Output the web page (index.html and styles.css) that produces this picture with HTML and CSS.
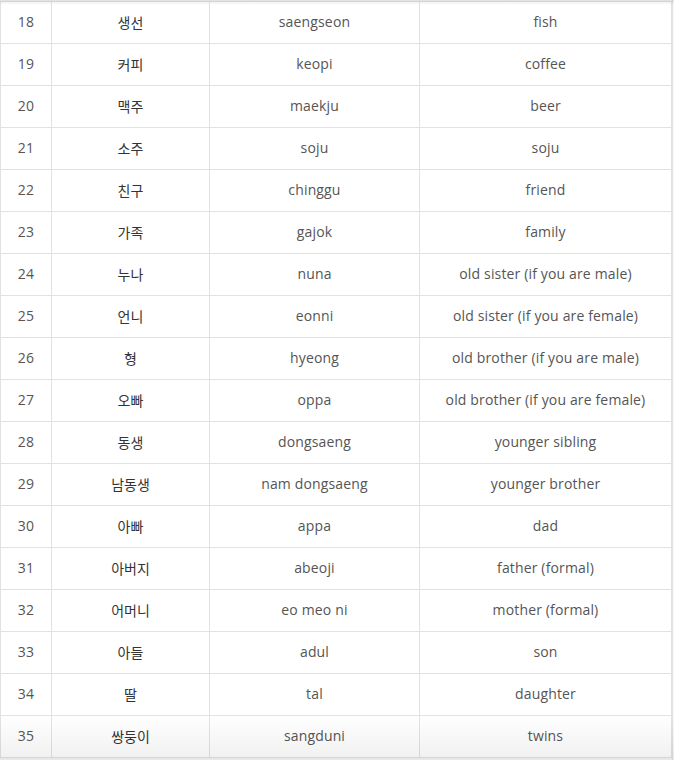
FILE: index.html
```html
<!DOCTYPE html>
<html lang="ko">
<head>
<meta charset="utf-8">
<title>Korean words</title>
<link rel="stylesheet" href="styles.css">
</head>
<body>
<div class="frame">
<table class="vocab">
<colgroup><col class="c-num"><col class="c-ko"><col class="c-rom"><col class="c-en"></colgroup>
<tbody>
<tr><td>18</td><td class="ko">생선</td><td>saengseon</td><td>fish</td></tr>
<tr><td>19</td><td class="ko">커피</td><td>keopi</td><td>coffee</td></tr>
<tr><td>20</td><td class="ko">맥주</td><td>maekju</td><td>beer</td></tr>
<tr><td>21</td><td class="ko">소주</td><td>soju</td><td>soju</td></tr>
<tr><td>22</td><td class="ko">친구</td><td>chinggu</td><td>friend</td></tr>
<tr><td>23</td><td class="ko">가족</td><td>gajok</td><td>family</td></tr>
<tr><td>24</td><td class="ko">누나</td><td>nuna</td><td>old sister (if you are male)</td></tr>
<tr><td>25</td><td class="ko">언니</td><td>eonni</td><td>old sister (if you are female)</td></tr>
<tr><td>26</td><td class="ko">형</td><td>hyeong</td><td>old brother (if you are male)</td></tr>
<tr><td>27</td><td class="ko">오빠</td><td>oppa</td><td>old brother (if you are female)</td></tr>
<tr><td>28</td><td class="ko">동생</td><td>dongsaeng</td><td>younger sibling</td></tr>
<tr><td>29</td><td class="ko">남동생</td><td>nam dongsaeng</td><td>younger brother</td></tr>
<tr><td>30</td><td class="ko">아빠</td><td>appa</td><td>dad</td></tr>
<tr><td>31</td><td class="ko">아버지</td><td>abeoji</td><td>father (formal)</td></tr>
<tr><td>32</td><td class="ko">어머니</td><td>eo meo ni</td><td>mother (formal)</td></tr>
<tr><td>33</td><td class="ko">아들</td><td>adul</td><td>son</td></tr>
<tr><td>34</td><td class="ko">딸</td><td>tal</td><td>daughter</td></tr>
<tr><td>35</td><td class="ko">쌍둥이</td><td>sangduni</td><td>twins</td></tr>
</tbody>
</table>
<div class="shade-top"></div>
<div class="shade-bottom"></div>
</div>
</body>
</html>
```
FILE: styles.css
```css
html, body {
  margin: 0;
  padding: 0;
  background: #ffffff;
  overflow: hidden;
}
.frame {
  width: 674px;
  height: 760px;
  overflow: hidden;
  position: relative;
  background: linear-gradient(to right, #f6f6f6 0, #f6f6f6 671px, #f4f4f4 671px, #f4f4f4 672px, #e2e2e2 672px, #e2e2e2 673px, #fafafa 673px);
}
.vocab {
  border-collapse: collapse;
  table-layout: fixed;
  width: 671px;
  margin-top: 1px;
  font-family: "Open Sans", "Noto Sans CJK KR", sans-serif;
  font-size: 14px;
  letter-spacing: 0.15px;
  color: #555555;
  background: #ffffff;
}
.c-num { width: 51px; }
.c-ko { width: 158px; }
.c-rom { width: 210px; }
.c-en { width: 252px; }
.vocab td {
  border: 1px solid #e2e2e2;
  height: 40px;
  padding: 0 0 1px;
  text-align: center;
  vertical-align: middle;
  line-height: 20px;
  white-space: nowrap;
}
.vocab td.ko {
  font-family: "Noto Sans CJK KR", sans-serif;
  letter-spacing: 0;
  color: #333333;
}
.shade-top {
  position: absolute;
  left: 0;
  top: 0;
  width: 100%;
  height: 5px;
  background: linear-gradient(to bottom, rgba(0,0,0,0.09), rgba(0,0,0,0));
  pointer-events: none;
}
.shade-bottom {
  position: absolute;
  left: 0;
  bottom: 0;
  width: 100%;
  height: 46px;
  background: linear-gradient(to bottom, rgba(0,0,0,0), rgba(0,0,0,0.06));
  pointer-events: none;
}
```
